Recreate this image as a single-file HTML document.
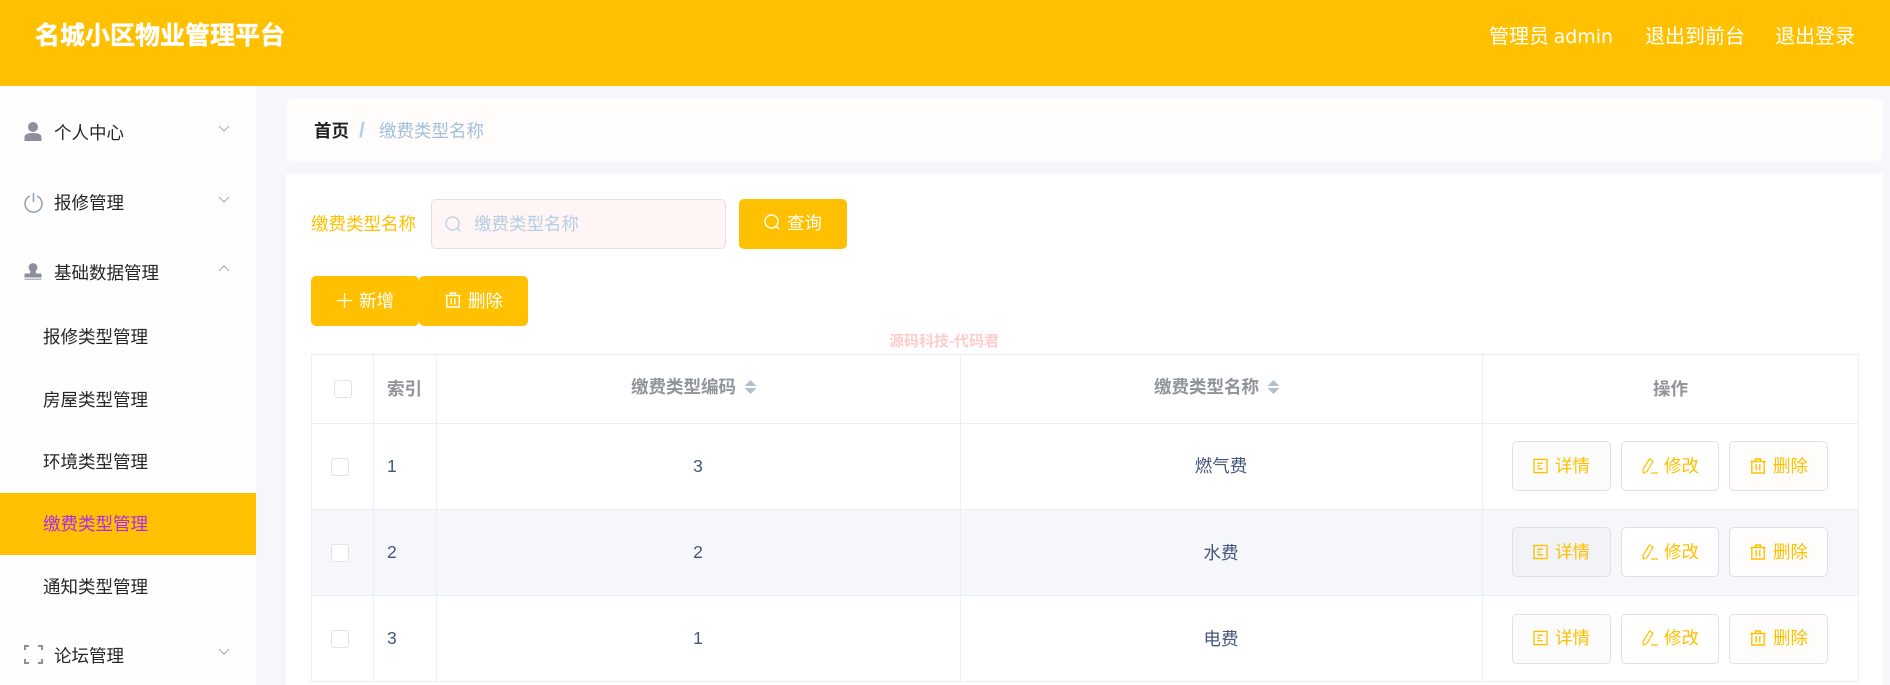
<!DOCTYPE html>
<html lang="zh-CN"><head><meta charset="utf-8"><title>名城小区物业管理平台</title>
<style>
*{box-sizing:border-box;margin:0;padding:0}
html,body{width:1890px;height:685px;overflow:hidden;background:#f5f7fa}
body{position:relative;font-family:"Liberation Sans","Noto Sans CJK SC",sans-serif;font-size:17.5px}
.a,.t,svg.i{position:absolute}
.t{white-space:nowrap;height:30px;line-height:30px}
.c{text-align:center}
.w{color:#fff}
.m{color:#262626}
.g{color:#45557c}
.h{color:#909399;font-weight:700}
.b{border:1px solid #dfe1e8;border-radius:5px}
.y{color:#ffc000}
.ln{position:absolute;background:#ebeef5}
.cb{position:absolute;width:18px;height:18px;background:#fff;border:1px solid #e1e3ea;border-radius:3px}
svg.i{fill:none;stroke-width:1.4;overflow:visible}
</style></head><body>
<svg width="0" height="0" style="position:absolute">
<defs>
<symbol id="trash" viewBox="0 0 16 16"><path d="M.5 3.500H15.500M5.500 3.500V1H10.500V3.500M1.800 3.500V15H14.200V3.500M6.200 6V12.500M9.800 6V12.500" fill="none" stroke="currentColor" stroke-width="1.400"/></symbol>
<symbol id="doc" viewBox="0 0 16 16"><path d="M1 1H15V15H1ZM4.500 5H10.500M4.500 8H8M4.500 11H10.500" fill="none" stroke="currentColor" stroke-width="1.400"/></symbol>
<symbol id="edit" viewBox="0 0 16 16"><path d="M1 11.500L7.500 1L11 3.200L5 13.500L1.500 15L1 11.500ZM9 15H16" fill="none" stroke="currentColor" stroke-width="1.200"/></symbol>
<symbol id="search" viewBox="0 0 16 16"><circle cx="7.500" cy="7.500" r="6.500" fill="none" stroke="currentColor" stroke-width="1.400"/><path d="M12 12L15 15" fill="none" stroke="currentColor" stroke-width="1.400"/></symbol>
<symbol id="chev" viewBox="0 0 12 7"><path d="M1 1L6 6L11 1" fill="none" stroke="currentColor" stroke-width="1"/></symbol>
<symbol id="sort" viewBox="0 0 13 16"><path d="M6.500 1L12.500 7H.5ZM.5 9H12.500L6.500 15Z" fill="currentColor"/></symbol>
</defs></svg>

<!-- header -->
<div class="a" style="left:0;top:0;width:1890px;height:86px;background:#ffc000"></div>
<div class="t w" style="left:35px;top:21px;font-size:25px;font-weight:700;-webkit-text-stroke:.4px #fff">名城小区物业管理平台</div>
<div class="t w" style="left:1489px;top:22px;font-size:20px">管理员 <span style="font-family:'DejaVu Sans',sans-serif;font-size:19px;margin-left:-1px">admin</span></div>
<div class="t w" style="left:1645px;top:22px;font-size:20px">退出到前台</div>
<div class="t w" style="left:1775px;top:22px;font-size:20px">退出登录</div>

<!-- sidebar -->
<div class="a" style="left:0;top:86px;width:256px;height:599px;background:#fefefe"></div>
<div class="a" style="left:0;top:493px;width:256px;height:62px;background:#ffc000"></div>

<svg class="i" style="left:24px;top:122px" width="18" height="19" viewBox="0 0 18 19"><circle cx="9" cy="5" r="5" fill="#8d909c"/><path d="M0.500 19V15C.5 12.500 3.500 11 9 11S17.500 12.500 17.500 15V19Z" fill="#8d909c"/></svg>
<div class="t m" style="left:54px;top:118px">个人中心</div>
<svg class="i" style="left:218px;top:125px;color:#a8a8ad" width="12" height="7"><use href="#chev"/></svg>

<svg class="i" style="left:24px;top:192px" width="19" height="20" viewBox="0 0 19 20"><path d="M6 4A8.500 8.500 0 1 0 13 4M9.500 1V10" stroke="#8d9aab" stroke-width="1.400"/></svg>
<div class="t m" style="left:54px;top:188px">报修管理</div>
<svg class="i" style="left:218px;top:196px;color:#a8a8ad" width="12" height="7"><use href="#chev"/></svg>

<svg class="i" style="left:24px;top:263px" width="18" height="17" viewBox="0 0 18 17"><circle cx="9" cy="4.500" r="4.400" fill="#8d909c"/><path d="M6.500 7H11.500L12 10.500H17Q17.500 10.500 17.500 11.500V14.500H.5V11.500Q.5 10.500 1 10.500H6Z" fill="#8d909c"/><path d="M.5 16.300H17.500" stroke="#a9b4c6" stroke-width="1.300"/></svg>
<div class="t m" style="left:54px;top:258px">基础数据管理</div>
<svg class="i" style="left:218px;top:265px;color:#a8a8ad;transform:rotate(180deg)" width="12" height="7"><use href="#chev"/></svg>

<div class="t m" style="left:43px;top:322px">报修类型管理</div>
<div class="t m" style="left:43px;top:385px">房屋类型管理</div>
<div class="t m" style="left:43px;top:447px">环境类型管理</div>
<div class="t" style="left:43px;top:509px;color:#a92cf0">缴费类型管理</div>
<div class="t m" style="left:43px;top:572px">通知类型管理</div>

<svg class="i" style="left:24px;top:645px" width="19" height="19" viewBox="0 0 19 19"><path d="M1 5V1H5M14 1H18V5M18 14V18H14M5 18H1V14" stroke="#8d909c" stroke-width="2"/></svg>
<div class="t m" style="left:54px;top:641px">论坛管理</div>
<svg class="i" style="left:218px;top:648px;color:#a8a8ad" width="12" height="7"><use href="#chev"/></svg>

<!-- breadcrumb -->
<div class="a" style="left:286px;top:99px;width:1597px;height:62px;background:#fffdfb;border-radius:6px"></div>
<div class="t" style="left:314px;top:116px;font-weight:700;color:#222">首页</div>
<div class="t" style="left:359px;top:116px;font-size:21px;font-weight:700;color:#b5cfe6">/</div>
<div class="t" style="left:379px;top:116px;color:#a3bfdb">缴费类型名称</div>

<!-- card -->
<div class="a" style="left:286px;top:174px;width:1597px;height:511px;background:#fff"></div>

<div class="t y" style="left:311px;top:209px">缴费类型名称</div>
<div class="a b" style="left:431px;top:199px;width:295px;height:50px;background:#fff5f5"></div>
<svg class="i" style="left:445px;top:216px;color:#bcd3e4" width="16" height="16"><use href="#search"/></svg>
<div class="t" style="left:474px;top:209px;color:#b5cee2">缴费类型名称</div>
<div class="a" style="left:739px;top:199px;width:108px;height:50px;background:#ffc000;border-radius:5px"></div>
<svg class="i" style="left:764px;top:214px;color:#fff" width="16" height="16"><use href="#search"/></svg>
<div class="t w" style="left:787px;top:208px">查询</div>

<div class="a" style="left:311px;top:276px;width:108px;height:50px;background:#ffc000;border-radius:5px"></div>
<div class="a" style="left:419px;top:276px;width:109px;height:50px;background:#ffc000;border-radius:5px"></div>
<svg class="i" style="left:337px;top:293px" width="15" height="15" viewBox="0 0 15 15"><path d="M7.500 0V15M0 7.500H15" stroke="#fff" stroke-width="1.300"/></svg>
<div class="t w" style="left:359px;top:286px">新增</div>
<svg class="i" style="left:445px;top:292px;color:#fff" width="16" height="16"><use href="#trash"/></svg>
<div class="t w" style="left:468px;top:286px">删除</div>

<!-- watermark -->
<div class="t" style="left:889px;top:327px;font-size:15px;font-weight:700;color:#ffcccc">源码科技-代码君</div>

<!-- table -->
<div class="a" style="left:311px;top:509px;width:1547px;height:87px;background:#f5f7fa"></div>
<div class="ln" style="left:311px;top:354px;width:1548px;height:1px"></div>
<div class="ln" style="left:311px;top:423px;width:1548px;height:1px"></div>
<div class="ln" style="left:311px;top:509px;width:1548px;height:1px"></div>
<div class="ln" style="left:311px;top:595px;width:1548px;height:1px"></div>
<div class="ln" style="left:311px;top:681px;width:1548px;height:1px"></div>
<div class="ln" style="left:311px;top:354px;width:1px;height:328px"></div>
<div class="ln" style="left:373px;top:354px;width:1px;height:328px"></div>
<div class="ln" style="left:436px;top:354px;width:1px;height:328px"></div>
<div class="ln" style="left:960px;top:354px;width:1px;height:328px"></div>
<div class="ln" style="left:1482px;top:354px;width:1px;height:328px"></div>
<div class="ln" style="left:1858px;top:354px;width:1px;height:328px"></div>

<div class="cb" style="left:334px;top:380px"></div>
<div class="t h" style="left:387px;top:374px">索引</div>
<div class="t h" style="left:631px;top:372px">缴费类型编码</div>
<svg class="i" style="left:744px;top:379px;color:#b4bfcc" width="13" height="16"><use href="#sort"/></svg>
<div class="t h" style="left:1154px;top:372px">缴费类型名称</div>
<svg class="i" style="left:1267px;top:379px;color:#b4bfcc" width="13" height="16"><use href="#sort"/></svg>
<div class="t h" style="left:1653px;top:374px">操作</div>

<div class="cb" style="left:331px;top:458px"></div>
<div class="cb" style="left:331px;top:544px"></div>
<div class="cb" style="left:331px;top:630px"></div>

<div class="t g" style="left:387px;top:451px">1</div>
<div class="t g" style="left:387px;top:537px">2</div>
<div class="t g" style="left:387px;top:623px">3</div>
<div class="t g c" style="left:648px;top:451px;width:100px">3</div>
<div class="t g c" style="left:648px;top:537px;width:100px">2</div>
<div class="t g c" style="left:648px;top:623px;width:100px">1</div>
<div class="t g c" style="left:1171px;top:451px;width:100px">燃气费</div>
<div class="t g c" style="left:1171px;top:538px;width:100px">水费</div>
<div class="t g c" style="left:1171px;top:624px;width:100px">电费</div>

<!-- row 1 actions -->
<div class="a b" style="left:1512px;top:441px;width:99px;height:50px;background:#fcfcfd"></div>
<svg class="i y" style="left:1533px;top:458px" width="15" height="16"><use href="#doc"/></svg>
<div class="t y" style="left:1555px;top:451px">详情</div>
<div class="a b" style="left:1621px;top:441px;width:98px;height:50px;background:#fff"></div>
<svg class="i y" style="left:1642px;top:458px" width="16" height="16"><use href="#edit"/></svg>
<div class="t y" style="left:1664px;top:451px">修改</div>
<div class="a b" style="left:1729px;top:441px;width:99px;height:50px;background:#fffdfb"></div>
<svg class="i y" style="left:1750px;top:458px" width="16" height="16"><use href="#trash"/></svg>
<div class="t y" style="left:1773px;top:451px">删除</div>

<!-- row 2 actions -->
<div class="a b" style="left:1512px;top:527px;width:99px;height:50px;background:#f1f3f6"></div>
<svg class="i y" style="left:1533px;top:544px" width="15" height="16"><use href="#doc"/></svg>
<div class="t y" style="left:1555px;top:537px">详情</div>
<div class="a b" style="left:1621px;top:527px;width:98px;height:50px;background:#fff"></div>
<svg class="i y" style="left:1642px;top:544px" width="16" height="16"><use href="#edit"/></svg>
<div class="t y" style="left:1664px;top:537px">修改</div>
<div class="a b" style="left:1729px;top:527px;width:99px;height:50px;background:#fffdfb"></div>
<svg class="i y" style="left:1750px;top:544px" width="16" height="16"><use href="#trash"/></svg>
<div class="t y" style="left:1773px;top:537px">删除</div>

<!-- row 3 actions -->
<div class="a b" style="left:1512px;top:614px;width:99px;height:50px;background:#fcfcfd"></div>
<svg class="i y" style="left:1533px;top:630px" width="15" height="16"><use href="#doc"/></svg>
<div class="t y" style="left:1555px;top:623px">详情</div>
<div class="a b" style="left:1621px;top:614px;width:98px;height:50px;background:#fff"></div>
<svg class="i y" style="left:1642px;top:630px" width="16" height="16"><use href="#edit"/></svg>
<div class="t y" style="left:1664px;top:623px">修改</div>
<div class="a b" style="left:1729px;top:614px;width:99px;height:50px;background:#fffdfb"></div>
<svg class="i y" style="left:1750px;top:630px" width="16" height="16"><use href="#trash"/></svg>
<div class="t y" style="left:1773px;top:623px">删除</div>
</body></html>
